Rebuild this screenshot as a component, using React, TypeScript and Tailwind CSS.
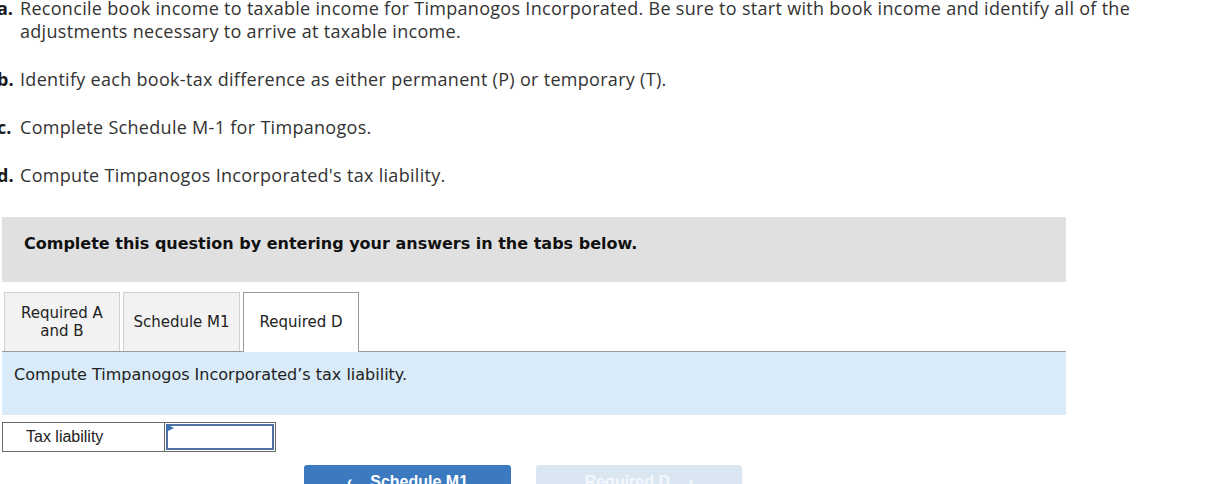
import React from "react";

const body = { fontFamily: "'Open Sans', Lato, sans-serif" };

function Item({ label, children }: { label: string; children: React.ReactNode }) {
  return (
    <div className="flex ml-[-3px] text-[18px] leading-[23px] tracking-[0.3px] text-[#333]" style={body}>
      <span className="w-[23px] shrink-0 font-bold text-[#1a1a1a] tracking-normal">{label}</span>
      <span>{children}</span>
    </div>
  );
}

export default function App() {
  return (
    <div className="w-[1209px] h-[484px] overflow-hidden bg-white relative">
      <div className="mt-[-3px]">
        <Item label="a.">
          Reconcile book income to taxable income for Timpanogos Incorporated. Be sure to start with book income and identify all of the
          <br />
          adjustments necessary to arrive at taxable income.
        </Item>
        <div className="h-[25px]" />
        <Item label="b.">Identify each book-tax difference as either permanent (P) or temporary (T).</Item>
        <div className="h-[25px]" />
        <Item label="c.">Complete Schedule M-1 for Timpanogos.</Item>
        <div className="h-[25px]" />
        <Item label="d.">Compute Timpanogos Incorporated's tax liability.</Item>
      </div>

      <div
        className="mt-[30px] ml-[2px] w-[1064px] h-[65px] bg-[#e0e0e0] pl-[22px] pt-[16px] leading-[22px] text-[16px] font-bold text-[#111]"
        style={{ fontFamily: "'DejaVu Sans', Verdana, sans-serif" }}
      >
        Complete this question by entering your answers in the tabs below.
      </div>

      <div className="ml-[2px] w-[1064px] mt-[10px]" style={{ fontFamily: "'DejaVu Sans', Verdana, sans-serif" }}>
        <div className="flex items-end h-[60px] border-b border-[#9a9a9a] pl-[2px] gap-[3px]">
          <div className="w-[116px] h-[59px] bg-[#f2f2f2] border border-b-0 border-[#d0d0d0] flex items-center justify-center text-center text-[15px] leading-[18px] text-[#222]">
            Required A
            <br />
            and B
          </div>
          <div className="w-[117px] h-[59px] bg-[#f2f2f2] border border-b-0 border-[#d0d0d0] flex items-center justify-center text-[15px] text-[#222]">
            Schedule M1
          </div>
          <div className="w-[116px] h-[60px] mb-[-1px] bg-white border border-b-0 border-[#9a9a9a] flex items-center justify-center text-[15px] text-[#222]">
            Required D
          </div>
        </div>
        <div className="h-[63px] bg-[#d9ebf9] pl-[12px] pt-[11px] text-[16px] text-[#222]">
          Compute Timpanogos Incorporated’s tax liability.
        </div>
      </div>

      <div className="ml-[2px] mt-[7px] w-[274px] h-[30px] border border-[#6b6b6b] flex">
        <div
          className="w-[162px] h-full flex items-center pl-[23px] text-[16px] text-[#222] border-r border-[#6b6b6b]"
          style={{ fontFamily: "'Liberation Sans', Arial, sans-serif" }}
        >
          Tax liability
        </div>
        <div className="flex-1 h-full p-[1px] relative">
          <div className="w-full h-full border-2 border-[#4f72a3] bg-white" />
          <svg className="absolute left-[1px] top-[1px]" width="8" height="8" viewBox="0 0 8 8">
            <polygon points="0,0 8,4 0,8" fill="#3b6fb6" />
          </svg>
        </div>
      </div>

      <div className="flex ml-[304px] mt-[13px] gap-[25px]" style={{ fontFamily: "'Liberation Sans', Arial, sans-serif" }}>
        <div className="w-[207px] h-[40px] rounded-t-[3px] bg-[#3c7abf] text-white font-bold text-[16px] leading-[18px] flex justify-center pt-[8px] gap-[18px]">
          <span>‹</span>
          <span>Schedule M1</span>
        </div>
        <div className="w-[206px] h-[40px] rounded-t-[3px] bg-[#dbe6f3] text-[#f4f8fc] font-bold text-[16px] leading-[18px] flex justify-center pt-[8px] gap-[18px]">
          <span>Required D</span>
          <span>›</span>
        </div>
      </div>
    </div>
  );
}
